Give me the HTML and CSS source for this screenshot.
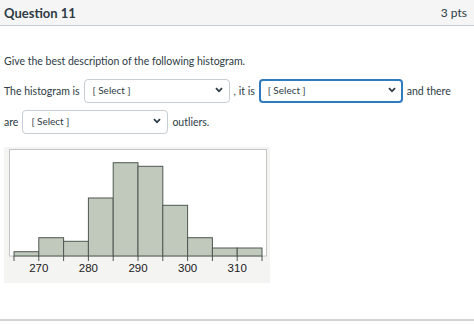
FILE: index.html
```html
<!DOCTYPE html>
<html>
<head>
<meta charset="utf-8">
<link rel="stylesheet" href="styles.css">
</head>
<body>
<div class="header">
  <span class="title">Question 11</span>
  <span class="pts">3 pts</span>
</div>
<div class="content">
  <p class="prompt">Give the best description of the following histogram.</p>
  <div class="row row-two">
    <span>The histogram is</span>
    <div class="select sel-a"><span>[ Select ]</span><svg class="chev" width="8" height="6" viewBox="0 0 8 6"><path d="M1 1.2 L4 4.3 L7 1.2" fill="none" stroke="#2d3b45" stroke-width="1.8"/></svg></div>
    <span>, it is</span>
    <div class="select sel-b focus"><span>[ Select ]</span><svg class="chev" width="8" height="6" viewBox="0 0 8 6"><path d="M1 1.2 L4 4.3 L7 1.2" fill="none" stroke="#2d3b45" stroke-width="1.8"/></svg></div>
    <span>and there</span>
  </div>
  <div class="row row-three">
    <span>are</span>
    <div class="select sel-a"><span>[ Select ]</span><svg class="chev" width="8" height="6" viewBox="0 0 8 6"><path d="M1 1.2 L4 4.3 L7 1.2" fill="none" stroke="#2d3b45" stroke-width="1.8"/></svg></div>
    <span>outliers.</span>
  </div>
  <div class="chart">
    <svg width="266" height="136" viewBox="0 0 266 136">
      <rect x="0" y="0" width="266" height="136" fill="#f4f4f2"/>
      <rect x="5.5" y="2.5" width="257" height="106.5" fill="#ffffff" stroke="#c4c4c4" stroke-width="1"/>
      <g fill="#c0c9bc" stroke="#4f5752" stroke-width="1">
        <rect x="10" y="104.7" width="24.8" height="4.3"/>
        <rect x="34.8" y="90.7" width="24.8" height="18.3"/>
        <rect x="59.6" y="94.3" width="24.8" height="14.7"/>
        <rect x="84.4" y="51" width="24.8" height="58"/>
        <rect x="109.2" y="15.7" width="24.8" height="93.3"/>
        <rect x="134" y="19.3" width="24.8" height="89.7"/>
        <rect x="158.8" y="58.3" width="24.8" height="50.7"/>
        <rect x="183.6" y="90.7" width="24.8" height="18.3"/>
        <rect x="208.4" y="101" width="24.8" height="8"/>
        <rect x="233.2" y="101" width="24.8" height="8"/>
      </g>
      <g stroke="#4f5752" stroke-width="1">
        <line x1="10" y1="109" x2="10" y2="114"/>
        <line x1="34.8" y1="109" x2="34.8" y2="114"/>
        <line x1="59.6" y1="109" x2="59.6" y2="114"/>
        <line x1="84.4" y1="109" x2="84.4" y2="114"/>
        <line x1="109.2" y1="109" x2="109.2" y2="114"/>
        <line x1="134" y1="109" x2="134" y2="114"/>
        <line x1="158.8" y1="109" x2="158.8" y2="114"/>
        <line x1="183.6" y1="109" x2="183.6" y2="114"/>
        <line x1="208.4" y1="109" x2="208.4" y2="114"/>
        <line x1="233.2" y1="109" x2="233.2" y2="114"/>
        <line x1="258" y1="109" x2="258" y2="114"/>
      </g>
      <g class="ticklabels" text-anchor="middle">
        <text x="34.8" y="125">270</text>
        <text x="84.4" y="125">280</text>
        <text x="134" y="125">290</text>
        <text x="183.6" y="125">300</text>
        <text x="233.2" y="125">310</text>
      </g>
    </svg>
  </div>
</div>
<div class="footer"></div>
</body>
</html>
```
FILE: styles.css
```css
html, body {
  margin: 0;
  padding: 0;
  background: #ffffff;
}
body {
  font-family: Lato, "Noto Sans", sans-serif;
  color: #2d3b45;
  font-size: 10.5px;
  width: 474px;
  height: 324px;
  overflow: hidden;
}
.header {
  height: 25px;
  background: #f5f5f5;
  border-bottom: 1px solid #c7cdd1;
  display: flex;
  align-items: center;
  justify-content: space-between;
  padding: 0 7px 0 4px;
  box-sizing: content-box;
}
.title {
  font-weight: 700;
  font-size: 13px;
  color: #2d3b45;
}
.pts {
  font-size: 12px;
  color: #2d3b45;
}
.content {
  padding: 0 4px;
}
.prompt {
  margin: 25px 0 0 0;
  line-height: 20px;
}
.row {
  display: flex;
  align-items: center;
  gap: 4px;
  height: 24px;
  white-space: nowrap;
}
.row-two {
  margin-top: 8px;
}
.row-three {
  margin-top: 7px;
}
.select {
  box-sizing: border-box;
  height: 24px;
  border: 1px solid #c7cdd1;
  border-radius: 4px;
  background: #ffffff;
  display: flex;
  align-items: center;
  justify-content: space-between;
  padding: 0 6px 0 8px;
  font-size: 10px;
  color: #2d3b45;
}
.select span {
  margin-top: -3px;
}
.select .chev {
  margin-top: -2px;
}
.sel-a {
  width: 146px;
}
.sel-b {
  width: 144px;
}
.focus {
  border: 2px solid #2f7bbf;
  padding: 0 5px 0 7px;
}
.chart {
  margin-top: 13px;
  width: 266px;
  height: 136px;
}
.chart svg {
  display: block;
}
.ticklabels {
  font-family: "Liberation Sans", Arial, sans-serif;
  font-size: 11.5px;
  fill: #1a1a1a;
}
.footer {
  margin-top: 36px;
  border-top: 2px solid #d0d4d7;
}
```
